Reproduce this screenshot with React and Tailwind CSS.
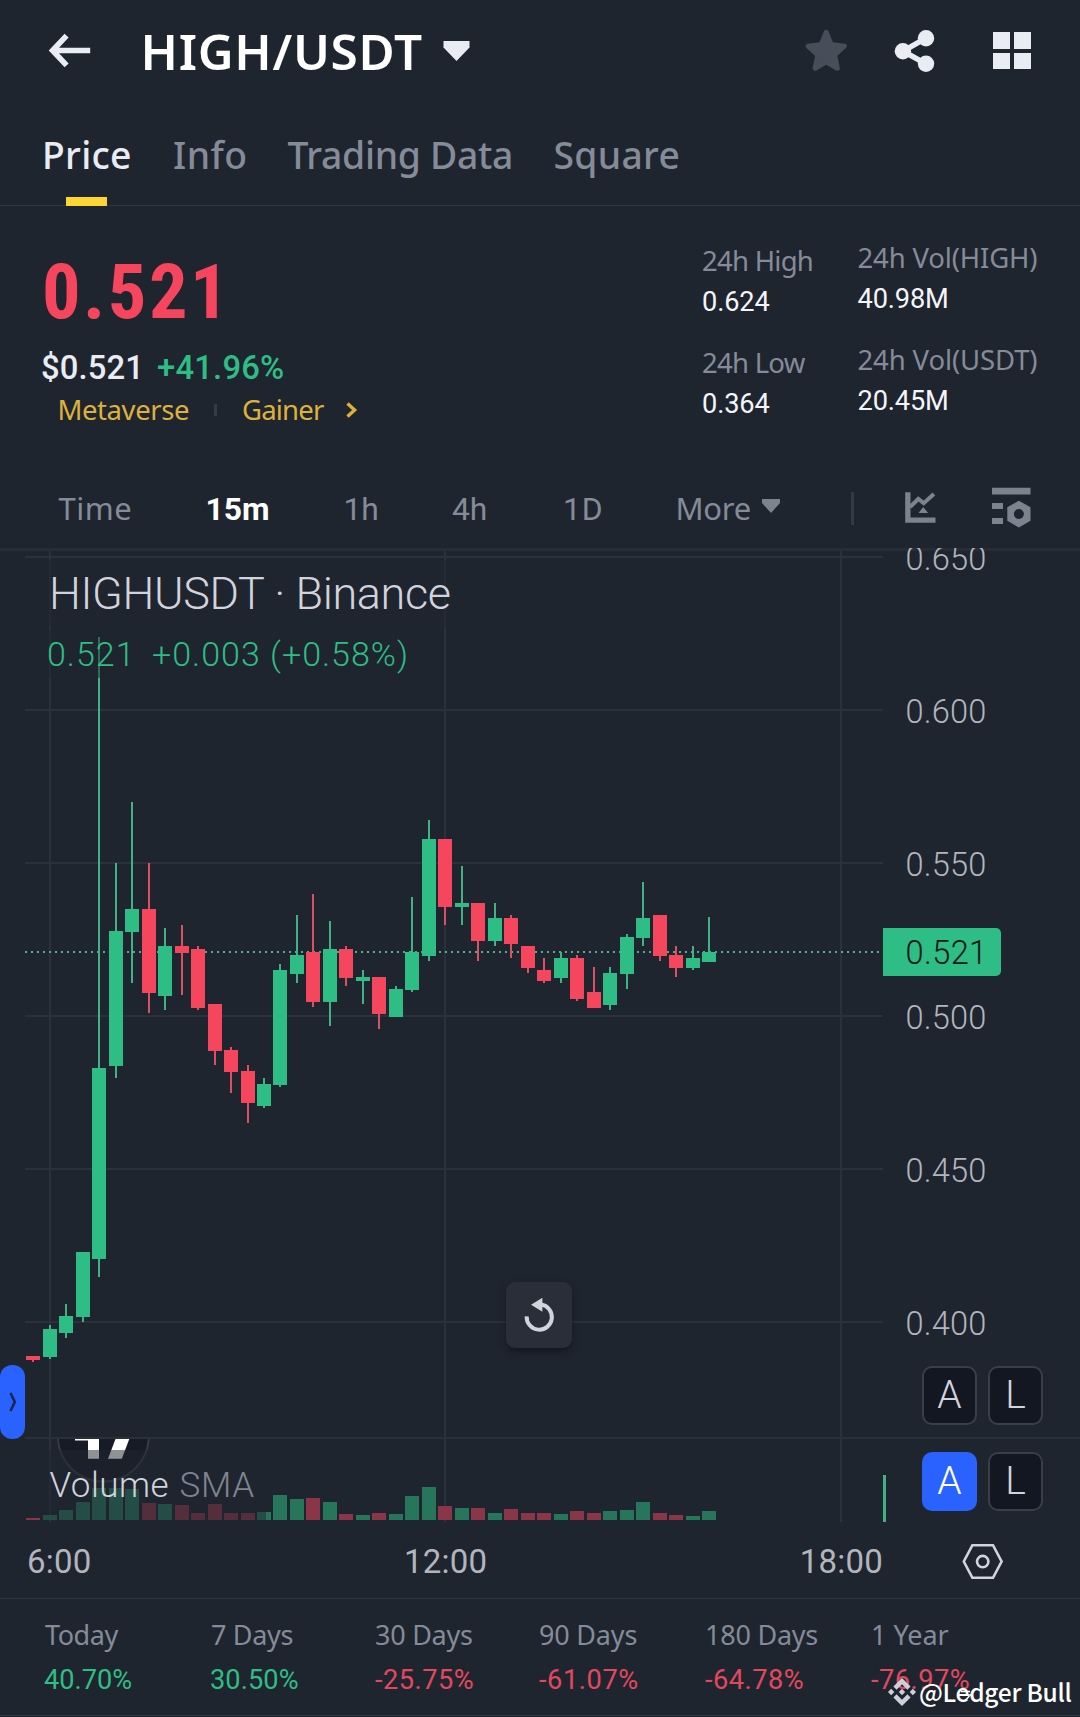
import React from "react";
import { SiBinance } from "react-icons/si";

const NOTO = "font-['Noto_Sans',sans-serif]";
const ROBOTO = "font-['Roboto',sans-serif]";

// [center x, high, body top, body bottom, low, volume top, direction]
const CANDLES = [
  [33, 1356, 1356, 1360, 1362, 1518, "d"],
  [50, 1325, 1329, 1357, 1359, 1515, "u"],
  [66, 1304, 1316, 1333, 1338, 1510, "u"],
  [83, 1252, 1252, 1317, 1322, 1502, "u"],
  [99, 637, 1068, 1259, 1277, 1488, "u"],
  [116, 863, 931, 1066, 1078, 1488, "u"],
  [132, 802, 909, 932, 983, 1489, "u"],
  [149, 863, 909, 993, 1013, 1503, "d"],
  [165, 928, 946, 996, 1010, 1504, "u"],
  [182, 925, 946, 953, 995, 1505, "d"],
  [198, 946, 949, 1008, 1010, 1513, "d"],
  [215, 1004, 1004, 1051, 1065, 1504, "d"],
  [231, 1047, 1050, 1072, 1093, 1513, "d"],
  [248, 1065, 1071, 1103, 1123, 1513, "d"],
  [264, 1078, 1084, 1106, 1108, 1512, "u"],
  [280, 964, 970, 1085, 1087, 1495, "u"],
  [297, 915, 955, 974, 983, 1499, "u"],
  [313, 894, 952, 1002, 1007, 1498, "d"],
  [330, 921, 949, 1002, 1026, 1502, "u"],
  [346, 946, 949, 978, 986, 1514, "d"],
  [363, 970, 977, 981, 1004, 1515, "u"],
  [379, 977, 977, 1014, 1029, 1513, "d"],
  [396, 986, 989, 1017, 1017, 1514, "u"],
  [412, 897, 952, 990, 992, 1496, "u"],
  [429, 820, 839, 956, 961, 1487, "u"],
  [445, 839, 839, 907, 925, 1506, "d"],
  [462, 866, 903, 907, 925, 1508, "u"],
  [478, 903, 903, 941, 961, 1508, "d"],
  [495, 903, 918, 941, 946, 1513, "u"],
  [511, 915, 918, 944, 958, 1509, "d"],
  [528, 946, 946, 968, 973, 1513, "d"],
  [544, 958, 970, 981, 983, 1513, "d"],
  [561, 952, 958, 978, 983, 1514, "u"],
  [577, 955, 958, 999, 1001, 1511, "d"],
  [594, 967, 992, 1008, 1008, 1513, "d"],
  [610, 967, 973, 1005, 1010, 1511, "u"],
  [627, 934, 937, 974, 989, 1510, "u"],
  [643, 882, 918, 938, 946, 1502, "u"],
  [660, 915, 915, 956, 961, 1513, "d"],
  [676, 946, 955, 968, 977, 1515, "d"],
  [693, 946, 958, 968, 970, 1516, "u"],
  [709, 917, 952, 962, 962, 1511, "u"],
];
const GRID_Y = [557, 710, 863, 1016, 1169, 1322];
const GRID_X = [50, 445, 841];
const DOTS = Array.from({ length: 143 }, (_, i) => 25 + i * 6);

function Header() {
  return (
    <header className="flex h-[102px] items-center">
      <svg className="ml-[48px] h-[36px] w-[44px]" viewBox="48 33.5 44 36" fill="none" stroke="#eaecf4" strokeWidth="5.6">
        <path d="M90.2 51H53M66.6 36.2 52.6 51l14 14.8" />
      </svg>
      <h1 className={`${NOTO} ml-[48.6px] w-[284px] text-[49.5px] leading-[60px] font-semibold tracking-[0.69px] whitespace-nowrap text-white`}>
        HIGH/USDT
      </h1>
      <svg className="ml-[18px] h-[20px] w-[27px]" viewBox="0 0 27 20" fill="#eaecf4">
        <path d="M0.5 0H26.5V6.5L13.5 20 0.5 6.5Z" />
      </svg>
      <svg className="ml-[333.4px] h-[46px] w-[46px]" viewBox="803 28 46 46" fill="#474d59" stroke="#474d59" strokeWidth="5" strokeLinejoin="round">
        <path d="M826.2 32.3 831.2 44.6 844.3 46.2 834.6 55 837.3 68.3 826.2 61.8 815.1 68.3 817.8 55 808.1 46.2 821.2 44.6Z" />
      </svg>
      <svg className="ml-[45px] h-[44px] w-[42px]" viewBox="894 28.5 42 44" fill="#eaecf4">
        <path d="M926 37.7 903 50.7 926 63.3" fill="none" stroke="#eaecf4" strokeWidth="5.4" />
        <circle cx="902.9" cy="50.7" r="8.2" />
        <circle cx="926" cy="37.8" r="8.2" />
        <circle cx="926" cy="63.2" r="8.2" />
      </svg>
      <div className="mb-[1px] ml-[57px] grid h-[37px] w-[38px] grid-cols-2 gap-[4px]">
        <i className="bg-[#eaecf4]" />
        <i className="bg-[#eaecf4]" />
        <i className="bg-[#eaecf4]" />
        <i className="bg-[#eaecf4]" />
      </div>
    </header>
  );
}

function Tabs() {
  return (
    <nav className={`${NOTO} flex h-[104px] items-stretch border-b border-[#303640] pl-[42px] text-[37.3px] leading-[106px] font-medium whitespace-nowrap text-[#858b98]`}>
      <span className="relative flex w-[131px] tracking-[0.3px] text-[#eaecf4]">
        Price
        <i className="absolute bottom-[-1px] left-[24px] h-[9px] w-[41px] bg-[#fcd535]" />
      </span>
      <span className="w-[114.5px] tracking-[0.47px]">Info</span>
      <span className="w-[266px] tracking-[-0.3px]">Trading Data</span>
      <span className="tracking-[0.3px]">Square</span>
    </nav>
  );
}

function Stat({ label, value, labelClass }) {
  return (
    <div className="flex flex-col gap-[9px] leading-[32px]">
      <span className={`${NOTO} text-[27.5px] text-[#858b98] ${labelClass}`}>{label}</span>
      <span className={`${ROBOTO} text-[27.2px] tracking-[-0.15px] text-[#f4f5fa]`}>{value}</span>
    </div>
  );
}

function Summary() {
  return (
    <section className="flex h-[262px] whitespace-nowrap">
      <div className="flex w-[702px] flex-col pt-[48px] pl-[41px]">
        <div className={`${ROBOTO} pl-[1px] text-[76.4px] leading-[76px] font-bold tracking-[2.5px] text-[#f6465d] [font-stretch:75%]`}>0.521</div>
        <div className={`${ROBOTO} mt-[20px] flex text-[32.8px] leading-[36px] font-medium`}>
          <span className="w-[116px] tracking-[0.1px] text-[#eaecf4]">$0.521</span>
          <span className="tracking-[0.2px] text-[#2ebd85]">+41.96%</span>
        </div>
        <div className={`${NOTO} mt-[9px] flex items-center pl-[16.5px] text-[27.5px] leading-[30px] text-[#dcb13c]`}>
          <span className="w-[156.5px] tracking-[-0.43px]">Metaverse</span>
          <i className="h-[12px] w-[3px] bg-[#363c47]" />
          <span className="ml-[25px] w-[104px] tracking-[-0.81px]">Gainer</span>
          <svg className="h-[16px] w-[12px]" viewBox="0 0 12 16" fill="none" stroke="#dcb13c" strokeWidth="3.4">
            <path d="M1.5 1.5 8.6 8 1.5 14.5" />
          </svg>
        </div>
      </div>
      <div className="flex w-[155.5px] flex-col gap-[29px] pt-[39px]">
        <Stat label="24h High" value="0.624" labelClass="tracking-[-0.74px]" />
        <Stat label="24h Low" value="0.364" labelClass="tracking-[-0.73px]" />
      </div>
      <div className="flex flex-col gap-[29px] pt-[36px]">
        <Stat label="24h Vol(HIGH)" value="40.98M" labelClass="tracking-[-0.15px]" />
        <Stat label="24h Vol(USDT)" value="20.45M" labelClass="tracking-[-0.12px]" />
      </div>
    </section>
  );
}

function Intervals() {
  return (
    <div className={`${ROBOTO} flex h-[80px] items-center pl-[58.5px] text-[31.8px] leading-[40px] whitespace-nowrap text-[#858b98]`}>
      <span className={`${NOTO} w-[147px] text-[31px] tracking-[0.5px]`}>Time</span>
      <span className="w-[138px] pt-[1px] font-bold text-white">15m</span>
      <span className="w-[108.5px] pt-[1px]">1h</span>
      <span className="w-[111px] pt-[1px]">4h</span>
      <span className="w-[112.5px] pt-[1px] tracking-[0.9px]">1D</span>
      <span className={`${NOTO} w-[86px] text-[31px] tracking-[-0.25px]`}>More</span>
      <svg className="mb-[5px] h-[14px] w-[18px]" viewBox="0 0 18 14" fill="#7d828f">
        <path d="M0 0H18V4L9 14 0 4Z" />
      </svg>
      <i className="ml-[71px] h-[33px] w-[3px] bg-[#343a45]" />
      <svg className="mb-[2px] ml-[51px] h-[31px] w-[31px]" viewBox="904.5 491 31 31" fill="#7d828f">
        <path d="M904.7 491.3H910V516.6H935V521.7H904.7Z" />
        <path d="M909.5 506 917.8 498 923.2 502.2 933.4 493" fill="none" stroke="#7d828f" strokeWidth="4" />
        <path d="M918 512 922.8 506 927.6 512Z" />
      </svg>
      <svg className="mb-[1px] ml-[56px] h-[41px] w-[39px]" viewBox="991.5 487 39 41" fill="#7d828f">
        <path d="M991.5 487.7H1030V494.5H991.5ZM991.5 503H1002.5V509H991.5ZM991.5 518H1002.5V524H991.5Z" />
        <path fillRule="evenodd" d="M1018.4 500.7 1030 507.3V520.7L1018.4 527.4 1006.8 520.7V507.3ZM1018.4 509A5 5 0 1 0 1018.4 519A5 5 0 1 0 1018.4 509Z" />
      </svg>
    </div>
  );
}

function ScaleButtons({ active }) {
  const base = `${ROBOTO} flex h-[59px] w-[55px] items-center justify-center rounded-[10px] pb-[1px] text-[39px] leading-none font-light`;
  return (
    <div className="flex gap-[11px]">
      <span className={`${base} ${active ? "bg-[#2962ff] text-white" : "border-2 border-[#3a3e48] bg-[#131722] text-[#d1d4dc]"}`}>A</span>
      <span className={`${base} border-2 border-[#3a3e48] bg-[#131722] text-[#d1d4dc]`}>L</span>
    </div>
  );
}

function PricePane() {
  return (
    <div className="relative flex h-[891px] overflow-hidden">
      <div className="relative w-[883px]">
        <svg className="block h-[891px] w-[883px]" viewBox="0 548 883 891" shapeRendering="crispEdges">
          <g fill="#2b313b">
            {GRID_Y.map((y) => <rect key={y} x="25" y={y - 1} width="858" height="2" />)}
            {GRID_X.map((x) => <rect key={x} x={x - 1} y="551" width="2" height="890" />)}
          </g>
          {DOTS.map((x) => <rect key={x} x={x} y="951" width="2" height="2" fill="#4fae8c" />)}
          {CANDLES.map(([x, hi, top, bot, lo, , dir]) => (
            <g key={x}>
              <rect x={x - 1} y={hi} width="2" height={lo - hi} fill={dir === "u" ? "#43b085" : "#dc4f66"} />
              <rect x={x - 7} y={top} width="14" height={bot - top} fill={dir === "u" ? "#2ebd85" : "#f6465d"} />
            </g>
          ))}
        </svg>
        <div className={`${ROBOTO} absolute top-[12px] left-[41px] font-light whitespace-nowrap`}>
          <div className="w-[417px] bg-[#1f252f]/50 pl-[8px] text-[45px] leading-[67px] tracking-[-0.38px] text-[#d1d4dc]">HIGHUSDT · Binance</div>
          <div className="mt-[3px] flex w-[374px] bg-[#1f252f]/50 pt-[1px] pl-[6px] text-[34px] leading-[47px] tracking-[1px] text-[#2ebd85]">
            <span className="w-[105px]">0.521</span>
            <span>+0.003 (+0.58%)</span>
          </div>
        </div>
        <div className="absolute top-[734px] left-[506px] flex h-[66px] w-[66px] items-center justify-center rounded-[9px] bg-[#2a2e39] shadow-[0_4px_7px_rgba(10,12,18,0.5)]">
          <svg className="h-[40px] w-[40px]" viewBox="519.3 1295 40 40" fill="none" stroke="#d1d4dc" strokeWidth="4">
            <path d="M527 1316.3A12.6 12.6 0 1 0 541.4 1304.6" />
            <path d="M531.3 1304.7 542.7 1297.7V1311.7Z" fill="#d1d4dc" stroke="none" />
          </svg>
        </div>
      </div>
      <div className={`${ROBOTO} -mt-[65px] flex flex-col pl-[22.5px] text-[32.6px] leading-[153px] font-light tracking-[0.2px] text-[#b2b5be]`}>
        <span>0.650</span>
        <span>0.600</span>
        <span>0.550</span>
        <span>0.500</span>
        <span>0.450</span>
        <span>0.400</span>
      </div>
      <div className={`${ROBOTO} absolute top-[380px] left-[883px] h-[48px] w-[118px] rounded-r-[5px] bg-[#2ebd85] pl-[22.5px] text-[32.6px] leading-[50px] font-light tracking-[0.4px] text-[#0c1417]`}>
        0.521
      </div>
      <div className="absolute bottom-[14px] left-[922px]">
        <ScaleButtons />
      </div>
      <div className="absolute bottom-0 left-[25px] h-[2px] w-full bg-[#2a303a]" />
      <div className="absolute bottom-0 left-0 flex h-[74px] w-[25px] items-center justify-center rounded-[12px] bg-[#2962ff]">
        <svg className="h-[20px] w-[8px]" viewBox="0 0 8 20" fill="none" stroke="#1a2650" strokeWidth="2.6">
          <path d="M1.5 1 5.8 10 1.5 19" />
        </svg>
      </div>
    </div>
  );
}

function VolumePane() {
  return (
    <div className="relative flex h-[83px] overflow-hidden">
      <svg className="block h-[83px] w-[883px]" viewBox="0 1439 883 83">
        <g fill="#2b313b" shapeRendering="crispEdges">
          {GRID_X.map((x) => <rect key={x} x={x - 1} y="1439" width="2" height="83" />)}
        </g>
        <circle cx="103.3" cy="1436" r="45.5" fill="#171b26" stroke="#363a45" strokeWidth="2" />
        <path fill="#fff" d="M75 1439H99V1458.7H88V1440.4H75ZM115.5 1439H129.3L121.8 1458.7H108Z" />
        <g shapeRendering="crispEdges">
          {CANDLES.map(([x, , , , , v, dir]) => (
            <rect key={x} x={x - 7} y={v} width="14" height={1520 - v} fill={dir === "u" ? "#27755b" : "#8b3648"} />
          ))}
        </g>
      </svg>
      <div className={`${ROBOTO} absolute top-[11px] left-[41px] h-[70px] w-[225px] bg-[#1f252f]/50 pl-[8.5px] text-[35px] leading-[72px] font-light whitespace-nowrap`}>
        <span className="tracking-[0.49px] text-[#d1d4dc]">Volume</span>
        <span className="ml-[10.5px] tracking-[0.63px] text-[#80848f]">SMA</span>
      </div>
      <div className="mt-[36px] h-[47px] w-[3px] bg-[#43b085]" />
      <div className="mt-[13px] ml-[36px]">
        <ScaleButtons active />
      </div>
    </div>
  );
}

function TimeAxis() {
  return (
    <div className={`${ROBOTO} flex h-[77px] items-center border-b border-[#303640] pt-[2px] pl-[27px] text-[33px] leading-[40px] tracking-[0.22px] text-[#b2b5be]`}>
      <span className="w-[377px] pt-[1px]">6:00</span>
      <span className="w-[395.7px] pt-[1px]">12:00</span>
      <span className="w-[161px] pt-[1px]">18:00</span>
      <svg className="h-[37px] w-[43px]" viewBox="961 1543.2 43 37" fill="none" stroke="#d1d4dc" strokeWidth="2.6">
        <path d="M972.4 1545.4H993L1001.6 1561.7 993 1578H972.4L963.8 1561.7Z" />
        <circle cx="982.7" cy="1561.8" r="5.7" />
      </svg>
    </div>
  );
}

const PERIODS = [
  ["Today", "40.70%", "tracking-[-0.43px] pl-[1px]", "tracking-[0px] text-[#2ebd85]"],
  ["7 Days", "30.50%", "tracking-[-0.34px] pl-[2px]", "tracking-[0.08px] pl-[1px] text-[#2ebd85]"],
  ["30 Days", "-25.75%", "tracking-[-0.26px] pl-[1px]", "tracking-[0.5px] pl-[1px] text-[#e2485e]"],
  ["90 Days", "-61.07%", "tracking-[-0.19px]", "tracking-[0.58px] text-[#e2485e]"],
  ["180 Days", "-64.78%", "tracking-[-0.23px] pl-[1px]", "tracking-[0.5px] pl-[1px] text-[#e2485e]"],
  ["1 Year", "-76.97%", "tracking-[-0.03px] pl-[2px]", "tracking-[0.5px] pl-[2px] text-[#e2485e]"],
];

function Performance() {
  return (
    <footer className="relative h-[117px] border-b border-[#303640]">
      <div className="grid grid-cols-[repeat(6,165px)] pt-[20px] pl-[44px]">
        {PERIODS.map(([label, value, labelClass, valueClass]) => (
          <div key={label} className="flex flex-col gap-[13px] leading-[32px] whitespace-nowrap">
            <span className={`${NOTO} text-[27px] text-[#858b98] ${labelClass}`}>{label}</span>
            <span className={`${ROBOTO} text-[27.2px] ${valueClass}`}>{value}</span>
          </div>
        ))}
      </div>
      <div className="absolute top-[75px] left-[888px] flex items-center gap-[3px] whitespace-nowrap">
        <SiBinance className="h-[28px] w-[28px] text-[#cdd0d8]" />
        <span className="font-['Noto_Sans_CJK_SC',sans-serif] text-[24.5px] leading-[36px] font-medium tracking-[-0.27px] text-white">@Ledger Bull</span>
        <svg className="absolute top-[12px] left-[72px] h-[16px] w-[12px]" viewBox="0 0 12 16" fill="none" stroke="#fff" strokeWidth="1.5">
          <path d="M1 5.5H10M0.5 9H11M9.5 10 4 15.5" />
        </svg>
      </div>
    </footer>
  );
}

export default function App() {
  return (
    <main className="h-[1717px] w-[1080px] overflow-hidden bg-[#1f252f]">
      <Header />
      <Tabs />
      <Summary />
      <Intervals />
      <section className="relative">
        <div className="absolute top-0 h-[3px] w-full bg-[#272d37]" />
        <PricePane />
        <VolumePane />
        <TimeAxis />
      </section>
      <Performance />
    </main>
  );
}
